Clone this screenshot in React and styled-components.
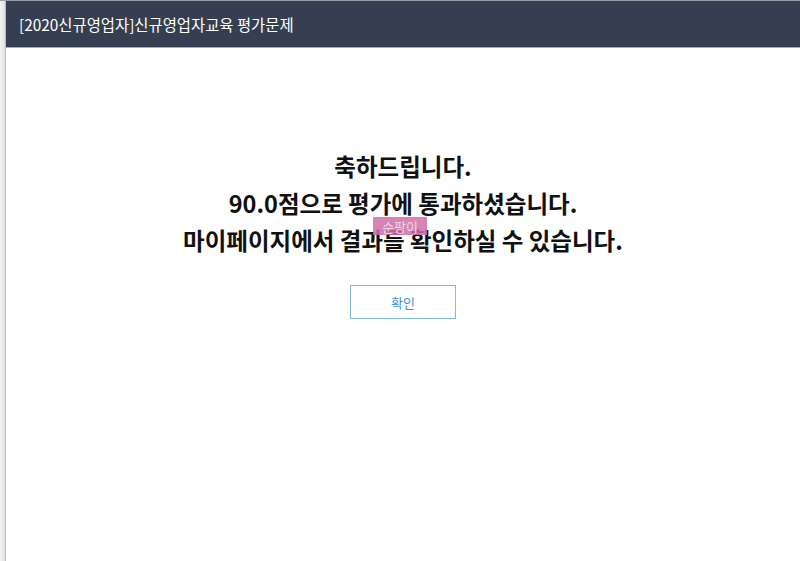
import React from "react";
import styled, { createGlobalStyle } from "styled-components";

const GlobalStyle = createGlobalStyle`
  html, body {
    margin: 0;
    padding: 0;
    background: #ffffff;
  }
  body {
    font-family: "Noto Sans CJK KR", "Noto Sans", sans-serif;
  }
`;

const Frame = styled.div`
  display: flex;
  width: 800px;
  height: 561px;
  overflow: hidden;
  border-top: 1px solid #9a9ea5;
  box-sizing: border-box;
`;

const Gutter = styled.div`
  width: 5px;
  flex-shrink: 0;
  background: linear-gradient(to right, #f4f4f4, #e2e2e2);
  border-right: 1px solid #b9b9b9;
`;

const Popup = styled.div`
  flex: 1;
  display: flex;
  flex-direction: column;
  background: #ffffff;
`;

const Header = styled.div`
  height: 46px;
  flex-shrink: 0;
  display: flex;
  align-items: center;
  padding: 0 0 0 13px;
  background: #363f51;
  border-bottom: 1px solid #a9adb5;
  color: #ffffff;
  font-size: 15.4px;
`;

const Body = styled.div`
  flex: 1;
  display: flex;
  flex-direction: column;
  align-items: center;
  padding-top: 100px;
`;

const Message = styled.div`
  position: relative;
  text-align: center;
  font-size: 23.5px;
  font-weight: bold;
  line-height: 37px;
  color: #111111;
`;

const Badge = styled.span`
  position: absolute;
  left: 190px;
  top: 69px;
  width: 54px;
  height: 18px;
  display: flex;
  align-items: center;
  justify-content: center;
  background: rgba(206, 110, 166, 0.85);
  color: #f3d6e6;
  font-size: 13px;
  font-weight: normal;
  line-height: 1;
`;

const ConfirmButton = styled.button`
  margin-top: 26px;
  width: 106px;
  height: 34px;
  background: #ffffff;
  border: 1px solid #7fbbe8;
  color: #3e90d8;
  font-family: "Noto Sans CJK KR", sans-serif;
  font-size: 13px;
  cursor: pointer;
`;

export default function App() {
  return (
    <>
      <GlobalStyle />
      <Frame>
        <Gutter />
        <Popup>
          <Header>[2020신규영업자]신규영업자교육 평가문제</Header>
          <Body>
            <Message>
              축하드립니다.
              <br />
              90.0점으로 평가에 통과하셨습니다.
              <br />
              마이페이지에서 결과를 확인하실 수 있습니다.
              <Badge>순팡이</Badge>
            </Message>
            <ConfirmButton>확인</ConfirmButton>
          </Body>
        </Popup>
      </Frame>
    </>
  );
}
